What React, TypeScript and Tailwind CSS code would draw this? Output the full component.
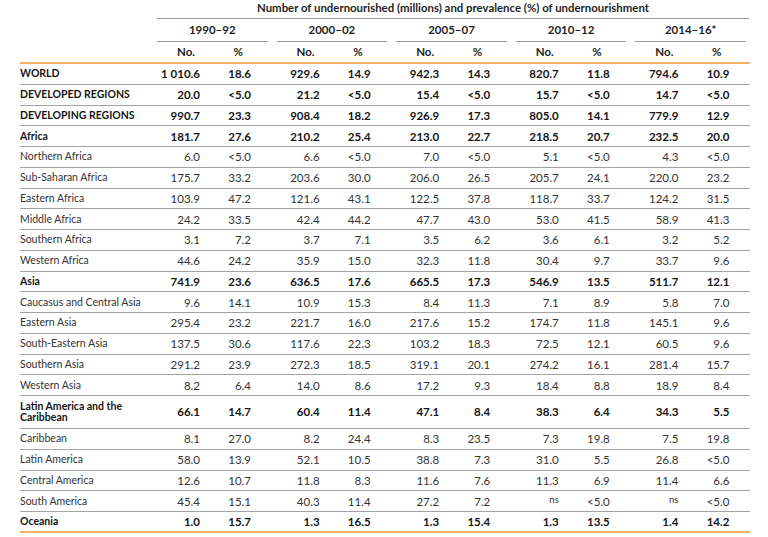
import React from "react";

type Row = { label: React.ReactNode; vals: string[]; bold?: boolean; tall?: boolean };

const rows: Row[] = [
  { label: "WORLD", vals: ["1 010.6", "18.6", "929.6", "14.9", "942.3", "14.3", "820.7", "11.8", "794.6", "10.9"], bold: true },
  { label: "DEVELOPED REGIONS", vals: ["20.0", "<5.0", "21.2", "<5.0", "15.4", "<5.0", "15.7", "<5.0", "14.7", "<5.0"], bold: true },
  { label: "DEVELOPING REGIONS", vals: ["990.7", "23.3", "908.4", "18.2", "926.9", "17.3", "805.0", "14.1", "779.9", "12.9"], bold: true },
  { label: "Africa", vals: ["181.7", "27.6", "210.2", "25.4", "213.0", "22.7", "218.5", "20.7", "232.5", "20.0"], bold: true },
  { label: "Northern Africa", vals: ["6.0", "<5.0", "6.6", "<5.0", "7.0", "<5.0", "5.1", "<5.0", "4.3", "<5.0"] },
  { label: "Sub-Saharan Africa", vals: ["175.7", "33.2", "203.6", "30.0", "206.0", "26.5", "205.7", "24.1", "220.0", "23.2"] },
  { label: "Eastern Africa", vals: ["103.9", "47.2", "121.6", "43.1", "122.5", "37.8", "118.7", "33.7", "124.2", "31.5"] },
  { label: "Middle Africa", vals: ["24.2", "33.5", "42.4", "44.2", "47.7", "43.0", "53.0", "41.5", "58.9", "41.3"] },
  { label: "Southern Africa", vals: ["3.1", "7.2", "3.7", "7.1", "3.5", "6.2", "3.6", "6.1", "3.2", "5.2"] },
  { label: "Western Africa", vals: ["44.6", "24.2", "35.9", "15.0", "32.3", "11.8", "30.4", "9.7", "33.7", "9.6"] },
  { label: "Asia", vals: ["741.9", "23.6", "636.5", "17.6", "665.5", "17.3", "546.9", "13.5", "511.7", "12.1"], bold: true },
  { label: "Caucasus and Central Asia", vals: ["9.6", "14.1", "10.9", "15.3", "8.4", "11.3", "7.1", "8.9", "5.8", "7.0"] },
  { label: "Eastern Asia", vals: ["295.4", "23.2", "221.7", "16.0", "217.6", "15.2", "174.7", "11.8", "145.1", "9.6"] },
  { label: "South-Eastern Asia", vals: ["137.5", "30.6", "117.6", "22.3", "103.2", "18.3", "72.5", "12.1", "60.5", "9.6"] },
  { label: "Southern Asia", vals: ["291.2", "23.9", "272.3", "18.5", "319.1", "20.1", "274.2", "16.1", "281.4", "15.7"] },
  { label: "Western Asia", vals: ["8.2", "6.4", "14.0", "8.6", "17.2", "9.3", "18.4", "8.8", "18.9", "8.4"] },
  { label: <>Latin America and the<br />Caribbean</>, vals: ["66.1", "14.7", "60.4", "11.4", "47.1", "8.4", "38.3", "6.4", "34.3", "5.5"], bold: true, tall: true },
  { label: "Caribbean", vals: ["8.1", "27.0", "8.2", "24.4", "8.3", "23.5", "7.3", "19.8", "7.5", "19.8"] },
  { label: "Latin America", vals: ["58.0", "13.9", "52.1", "10.5", "38.8", "7.3", "31.0", "5.5", "26.8", "<5.0"] },
  { label: "Central America", vals: ["12.6", "10.7", "11.8", "8.3", "11.6", "7.6", "11.3", "6.9", "11.4", "6.6"] },
  { label: "South America", vals: ["45.4", "15.1", "40.3", "11.4", "27.2", "7.2", "ns", "<5.0", "ns", "<5.0"] },
  { label: "Oceania", vals: ["1.0", "15.7", "1.3", "16.5", "1.3", "15.4", "1.3", "13.5", "1.4", "14.2"], bold: true },
];

const years = ["1990–92", "2000–02", "2005–07", "2010–12", "2014–16*"];

export default function App() {
  return (
    <div className="w-[768px] h-[537px] bg-white overflow-hidden text-[10.5px] text-[#2a2a2a]" style={{ fontFamily: "Lato, 'Open Sans', sans-serif" }}>
      <div className="ml-[20px] w-[730px]">
        {/* Title */}
        <div className="flex h-[19px]">
          <div className="w-[132px] shrink-0" />
          <div className="flex-1 pl-[5px] pr-[1px]">
            <div className="h-[19px] border-b border-[#9a9a9a] text-center font-bold text-[11.4px] leading-[16px] text-[#1f1f1f]">
              Number of undernourished (millions) and prevalence (%) of undernourishment
            </div>
          </div>
        </div>
        {/* Years */}
        <div className="flex h-[23px]">
          <div className="w-[132px] shrink-0" />
          {years.map((y) => (
            <div key={y} className="w-[119.6px] shrink-0 pl-[5px] pr-[4px]">
              <div className="h-[23px] border-b border-[#9a9a9a] text-center font-bold text-[11.5px] leading-[22px] text-[#1f1f1f]">{y}</div>
            </div>
          ))}
        </div>
        {/* No. / % */}
        <div className="flex h-[22px] border-b-2 border-[#f5b266] font-bold text-[11.5px] text-[#1f1f1f]">
          <div className="w-[132px] shrink-0" />
          {years.map((y) => (
            <div key={y} className="w-[119.6px] shrink-0 flex leading-[20px]">
              <div className="w-[48px] text-right pr-[5px]">No.</div>
              <div className="w-[51px] text-right pr-[8px]">%</div>
            </div>
          ))}
        </div>
        {/* Body */}
        {rows.map((r, i) => (
          <div
            key={i}
            className={
              "flex items-center " +
              (r.tall ? "h-[33px] " : "h-[20.75px] ") +
              (i === rows.length - 1 ? "border-b-2 border-[#f5b266] " : "border-b border-[#a3a3a3] ") +
              (r.bold ? "font-bold text-[#151515]" : "text-[#333333]")
            }
          >
            <div className="w-[132px] shrink-0 leading-[11px]">{r.label}</div>
            {[0, 1, 2, 3, 4].map((g) => (
              <div key={g} className="w-[119.6px] shrink-0 flex text-[11.5px]">
                <div className={"w-[48px] text-right " + (r.vals[g * 2] === "ns" ? "text-[9.5px]" : "")}>{r.vals[g * 2]}</div>
                <div className="w-[51px] text-right">{r.vals[g * 2 + 1]}</div>
              </div>
            ))}
          </div>
        ))}
      </div>
    </div>
  );
}
